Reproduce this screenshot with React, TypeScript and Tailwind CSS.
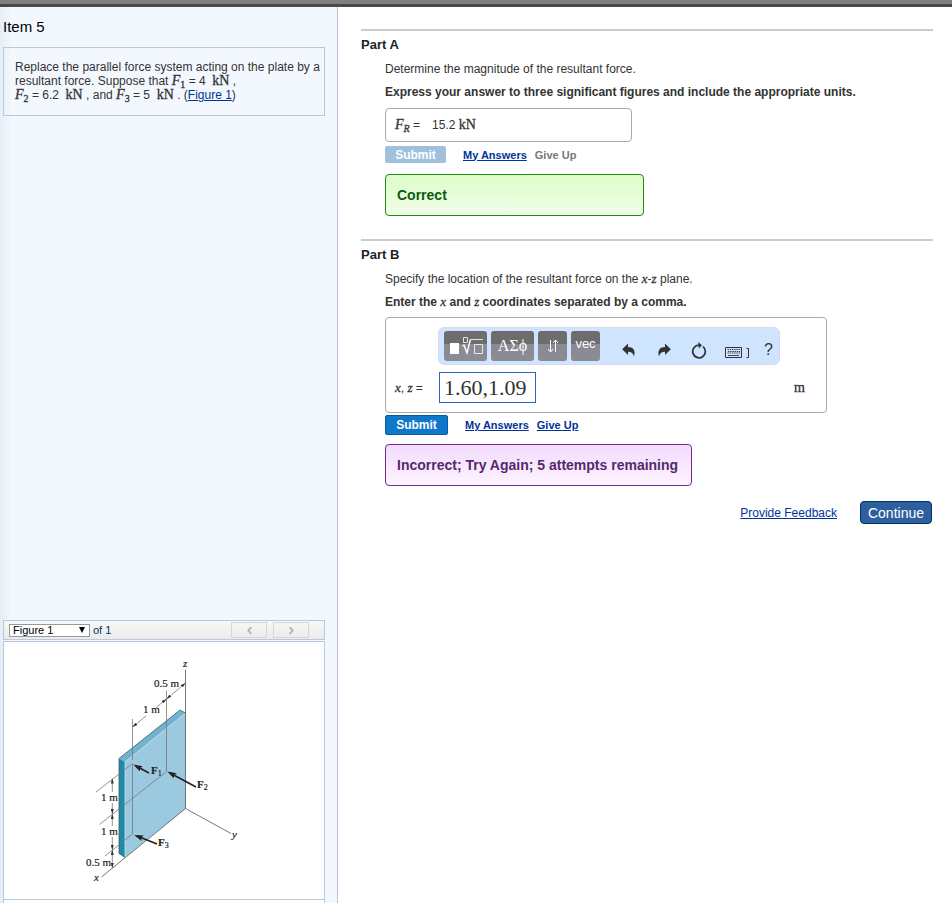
import type { ReactNode } from "react";
import { ChevronLeft, ChevronRight } from "lucide-react";

const Var = ({ name, sub }: { name: string; sub?: string }) => (
  <span
    className={
      sub
        ? "font-['Liberation_Serif',serif] text-[14px] leading-[0] font-normal italic [-webkit-text-stroke:0.3px]"
        : "font-['Liberation_Serif',serif] text-[13px] leading-[0] font-normal italic [-webkit-text-stroke:0.3px]"
    }
  >
    {name}
    {sub && <sub className={sub === "R" ? "text-[10px]" : "text-[10px] not-italic"}>{sub}</sub>}
  </span>
);

const Unit = ({ children }: { children: ReactNode }) => (
  <span className="font-['Liberation_Serif',serif] text-[14px] leading-[0] [-webkit-text-stroke:0.3px]">{children}</span>
);

const linkClass = "text-[#003399] underline";

const Arrow = ({ from, to }: { from: [number, number]; to: [number, number] }) => (
  <line x1={from[0]} y1={from[1]} x2={to[0]} y2={to[1]} stroke="#231f20" strokeWidth="1.6" markerEnd="url(#force)" />
);

const PlateFigure = () => (
  <svg viewBox="4 642 320 257" className="block w-full" role="img" aria-label="Plate with three parallel forces">
    <defs>
      <marker id="force" viewBox="0 0 9 6" refX="6" refY="3" markerWidth="9" markerHeight="6" markerUnits="userSpaceOnUse" orient="auto">
        <path d="M0 0 9 3 0 6 1.5 3Z" fill="#231f20" />
      </marker>
      <marker id="dim" viewBox="0 0 5 3" refX="5" refY="1.5" markerWidth="5" markerHeight="3" markerUnits="userSpaceOnUse" orient="auto-start-reverse">
        <path d="M0 0 5 1.5 0 3Z" fill="#333" />
      </marker>
    </defs>

    {/* plate */}
    <path d="M125 762 185.5 713V808.5L125 857.5Z" fill="#9bc9df" />
    <path d="M119 758.5 180 710 185.5 713 125 762Z" fill="#6fb3d0" />
    <path d="M119 758.5 125 762V857.5L119 853.5Z" fill="#2089a5" />
    <path d="M125 857V762L185 713.5" fill="none" stroke="#c3e2ef" strokeWidth="0.8" />
    <path d="M125 857.5 119 853.5V758.5L180 710 185.5 713" fill="none" stroke="#3f5f6b" strokeWidth="0.8" />

    {/* axes and guides */}
    <g fill="none" stroke="#777" strokeWidth="0.8">
      <path d="M185.5 669.5V808.5L231 833.5M185.5 808.5 101.5 877" stroke="#555" />
      <path d="M132.5 719V760M132.5 763.5V834L105 856M166.5 690.5V771.5L99.5 824.5M132.5 763.5 96 792" />
    </g>
    <g stroke="#666" strokeWidth="0.7">
      <path d="M146 716 132.5 727" markerEnd="url(#dim)" />
      <path d="M156 707.5 166.5 699" markerEnd="url(#dim)" />
      <path d="M166.5 699 185.5 683" markerStart="url(#dim)" markerEnd="url(#dim)" />
      <path d="M112.3 778.5V792M112.3 803V814" markerStart="url(#dim)" markerEnd="url(#dim)" />
      <path d="M112.3 814V826M112.3 837V850" markerStart="url(#dim)" markerEnd="url(#dim)" />
      <path d="M112.3 850V868" markerStart="url(#dim)" markerEnd="url(#dim)" />
    </g>
    <Arrow from={[149, 773]} to={[136, 766]} />
    <Arrow from={[196, 787]} to={[170, 773]} />
    <Arrow from={[157, 844]} to={[137, 836]} />

    <g className="font-['Liberation_Serif',serif] text-[11px]" fill="#231f20" stroke="#231f20" strokeWidth="0.2">
      <text x="154" y="687">0.5 m</text>
      <text x="143" y="713">1 m</text>
      <text x="101" y="801">1 m</text>
      <text x="101" y="835">1 m</text>
      <text x="86" y="866">0.5 m</text>
      <g className="italic">
        <text x="183" y="667">z</text>
        <text x="232" y="838">y</text>
        <text x="94" y="881">x</text>
      </g>
      <text x="151" y="774" className="font-bold">F<tspan dy="2" className="text-[8px] font-normal">1</tspan></text>
      <text x="197" y="788" className="font-bold">F<tspan dy="2" className="text-[8px] font-normal">2</tspan></text>
      <text x="158" y="846" className="font-bold">F<tspan dy="2" className="text-[8px] font-normal">3</tspan></text>
    </g>
  </svg>
);

const Problem = () => (
  <aside className="flex w-[338px] shrink-0 flex-col border-r border-[#b6c6d8] bg-[#f3f8ff] bg-linear-to-r from-[#e6edf4] to-transparent to-[12px] pl-[3px] pr-3">
    <h1 className="mt-[10px] text-[15px] leading-5 text-black">Item 5</h1>
    <div className="mt-[10px] h-[69px] border border-[#b6cade] pt-3 pl-[11px] leading-[14px]">
      <p className="whitespace-nowrap">
        Replace the parallel force system acting on the plate by a
        <br />
        resultant force. Suppose that <Var name="F" sub="1" /> = 4&nbsp; <Unit>kN</Unit> ,
        <br />
        <Var name="F" sub="2" /> = 6.2&nbsp; <Unit>kN</Unit> , and <Var name="F" sub="3" /> = 5&nbsp; <Unit>kN</Unit> . (
        <a href="#figure" className={linkClass}>Figure 1</a>)
      </p>
    </div>
    <div id="figure" className="mt-auto">
      <div className="flex h-5 items-center border border-[#b6cade] bg-linear-to-b from-[#f8f8f8] to-[#ebebeb] px-[5px] text-[11px]">
        <div className="relative">
          <select aria-label="Figure" className="block h-[13px] w-[81px] appearance-none border border-[#999] bg-white pl-[3px] text-[11px] leading-[11px] text-black">
            <option>Figure 1</option>
          </select>
          <svg viewBox="0 0 6 6" className="pointer-events-none absolute top-[3px] right-[5px] size-[6px]">
            <path d="M0 0H6L3 6Z" />
          </svg>
        </div>
        <span className="ml-[3px] text-[#003366]">of 1</span>
        <div className="mr-[10px] ml-auto flex gap-[6px] text-[#b5b5b5]">
          <button aria-label="Previous figure" className="flex h-4 w-9 items-center justify-center border border-[#d6d6d6]">
            <ChevronLeft size={11} strokeWidth={4} />
          </button>
          <button aria-label="Next figure" className="flex h-4 w-9 items-center justify-center border border-[#d6d6d6]">
            <ChevronRight size={11} strokeWidth={4} />
          </button>
        </div>
      </div>
      <div className="mt-px border border-[#b6cade] bg-white">
        <PlateFigure />
      </div>
      <div className="h-[3px] border-x border-[#b6cade] bg-white" />
    </div>
  </aside>
);

const Part = ({ title, children }: { title: string; children: ReactNode }) => (
  <section className="border-t-2 border-[#cccccc] pt-[6px]">
    <h2 className="text-[13px] leading-4 font-bold text-[#222]">{title}</h2>
    <div className="mt-2 pl-6">{children}</div>
  </section>
);

const toolClass =
  "flex h-[30px] items-center justify-center rounded-[3px] bg-linear-to-b from-[#6d6d6d] from-45% to-[#8b8b93] to-45% text-white";

const Toolbar = () => (
  <div className="flex h-[38px] w-[342px] items-center rounded-md border border-[#d9dce6] bg-[#cfe5ff] pl-[5px] text-[#333]">
    <div className="flex gap-1">
      <button aria-label="Templates" className={`${toolClass} w-[43px]`}>
        <svg viewBox="0 0 36 22" className="h-[22px] w-9" fill="none" stroke="#fff">
          <path d="M2 8H11V19H2Z" fill="#fff" stroke="none" />
          <path d="M15.5 2.5H19.5V7.5H15.5ZM26.5 9.5H34.5V18.5H26.5ZM22.5 4.5H35" strokeOpacity="0.8" />
          <path d="M14.5 11 16 10 19 18 22.5 4.5" strokeWidth="1.4" />
        </svg>
      </button>
      <button aria-label="Symbols" className={`${toolClass} w-[43px] font-['Liberation_Serif',serif] text-[16px]`}>ΑΣϕ</button>
      <button aria-label="Arrows" className={`${toolClass} w-[29px]`}>
        <svg viewBox="0 0 12 14" className="h-[14px] w-3" fill="none" stroke="#fff">
          <path d="M3.5 1V13M1 10 3.5 13 6 10M8.5 13V1M6 4 8.5 1 11 4" />
        </svg>
      </button>
      <button className={`${toolClass} w-[29px] pb-1 text-[13px]`}>vec</button>
    </div>
    <div className="mt-2 ml-[22px] flex items-center">
      <button aria-label="Undo">
        <svg viewBox="0 0 14 14" className="size-[14px]" fill="currentColor">
          <path d="M6 .5V4C11 4 13.8 7 12 13.5 11.2 10 9 8.7 6 8.7V12L.2 6.2Z" />
        </svg>
      </button>
      <button aria-label="Redo" className="ml-[21px]">
        <svg viewBox="0 0 14 14" className="size-[14px]" fill="currentColor">
          <path d="M8 .5V4C3 4 .2 7 2 13.5 2.8 10 5 8.7 8 8.7V12L13.8 6.2Z" />
        </svg>
      </button>
      <button aria-label="Reset" className="ml-5">
        <svg viewBox="0 0 16 17" className="h-[17px] w-4" fill="none" stroke="currentColor" strokeWidth="1.8">
          <path d="M12 4.6A6.3 6.3 0 1 1 8 3.2" />
          <path d="M7.3 0 11 3.2 7.8 6.5Z" fill="currentColor" stroke="none" />
        </svg>
      </button>
      <button aria-label="Keyboard" className="mt-1 ml-[18px]">
        <svg viewBox="0 0 25 11" className="h-[11px] w-[25px]" fill="none" stroke="currentColor">
          <path d="M.5 .5H16.5V10.5H.5Z" />
          <path d="M2.5 2.5H15M3 4.5H15M2.5 6H15" strokeDasharray="1.5 .7" strokeWidth="0.9" />
          <path d="M3 8.5H14" strokeWidth="0.9" />
          <path d="M21.5 1.5H23.5V10.5H21.5" />
        </svg>
      </button>
      <button aria-label="Help" className="ml-[14px] text-[16px] leading-4">?</button>
    </div>
  </div>
);

export default function App() {
  return (
    <div className="flex min-h-screen flex-col bg-white font-['Liberation_Sans',Arial,sans-serif] text-[12px] leading-4 text-[#333]">
      <header className="h-[7px] border-b-[3px] border-[#484848] bg-[#808080]" />
      <div className="flex flex-1">
        <Problem />
        <main className="min-w-0 flex-1 pt-[22px] pr-[19px] pl-[23px]">
          <Part title="Part A">
            <p>Determine the magnitude of the resultant force.</p>
            <p className="mt-[7px] font-bold">Express your answer to three significant figures and include the appropriate units.</p>
            <div className="mt-2 flex h-[34px] max-w-[247px] items-center rounded border border-[#a9a9a9] px-[9px]">
              <span><Var name="F" sub="R" /> =</span>
              <span className="ml-3">15.2 <Unit>kN</Unit></span>
            </div>
            <div className="mt-1 flex h-[17px] items-center text-[11px] font-bold">
              <button disabled className="h-full w-[61px] rounded-xs bg-[#9fc1dc] text-[12px] text-white">Submit</button>
              <a href="#answers-a" className={`ml-[17px] ${linkClass}`}>My Answers</a>
              <span className="ml-2 text-[#777]">Give Up</span>
            </div>
            <div className="mt-[11px] flex h-[42px] max-w-[259px] items-center rounded border border-[#1b9010] bg-linear-to-b from-[#dcfcc8] to-[#f2fee9] px-[11px] text-[14px] font-bold text-[#0b5c0b]">
              Correct
            </div>
          </Part>

          <div className="mt-[23px]">
            <Part title="Part B">
              <p>Specify the location of the resultant force on the <Var name="x" />-<Var name="z" /> plane.</p>
              <p className="mt-[7px] font-bold">Enter the <Var name="x" /> and <Var name="z" /> coordinates separated by a comma.</p>
              <div className="mt-[7px] h-24 max-w-[442px] rounded border border-[#a9a9a9] pt-[9px] pr-[21px] pl-[9px]">
                <div className="pl-[43px]">
                  <Toolbar />
                </div>
                <div className="mt-[7px] flex items-center">
                  <label htmlFor="xz" className="w-11 whitespace-nowrap"><Var name="x" />, <Var name="z" /> =</label>
                  <input
                    id="xz"
                    defaultValue="1.60,1.09"
                    className="h-[31px] w-[97px] border border-[#2c62c4] bg-white px-1 font-['Liberation_Serif',serif] text-[22px]"
                  />
                  <span className="ml-auto"><Unit>m</Unit></span>
                </div>
              </div>
              <div className="mt-[2px] flex h-5 items-center text-[11px] font-bold">
                <button className="h-full w-[63px] rounded-xs border border-[#0b5a9b] bg-[#0f78cb] text-[12px] text-white">Submit</button>
                <a href="#answers-b" className={`ml-[17px] ${linkClass}`}>My Answers</a>
                <a href="#give-up" className={`ml-2 ${linkClass}`}>Give Up</a>
              </div>
              <div className="mt-[9px] flex h-[42px] max-w-[307px] items-center rounded border border-[#702a8c] bg-linear-to-b from-[#f2dcfd] to-[#fdf3ff] px-[11px] text-[14px] font-bold whitespace-nowrap text-[#56286e]">
                Incorrect; Try Again; 5 attempts remaining
              </div>
            </Part>
          </div>

          <div className="mt-[15px] mr-px flex items-center justify-end gap-[23px]">
            <a href="#feedback" className={linkClass}>Provide Feedback</a>
            <button className="h-[23px] w-[72px] rounded border border-[#003366] bg-[#2d5f9e] text-[14px] leading-5 text-white">Continue</button>
          </div>
        </main>
      </div>
    </div>
  );
}
